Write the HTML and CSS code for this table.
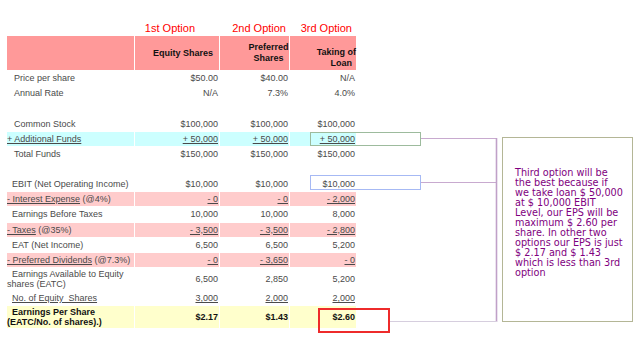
FILE: index.html
```html
<!DOCTYPE html>
<html>
<head>
<meta charset="utf-8">
<link rel="stylesheet" href="styles.css">
</head>
<body>
<div class="page">
  <table class="sheet">
    <colgroup>
      <col class="c-label"><col class="c-1"><col class="c-2"><col class="c-3">
    </colgroup>
    <tr class="titles">
      <td></td><td class="t1">1st Option</td><td class="t2">2nd Option</td><td class="t3">3rd Option</td>
    </tr>
    <tr class="head">
      <td></td>
      <td class="h1">Equity Shares</td>
      <td class="h2">Preferred<br>Shares</td>
      <td class="h3"><div class="h3a">Taking of</div><div>Loan</div></td>
    </tr>
    <tr><td class="lab i7">Price per share</td><td class="num">$50.00</td><td class="num">$40.00</td><td class="num">N/A</td></tr>
    <tr><td class="lab i7">Annual Rate</td><td class="num">N/A</td><td class="num">7.3%</td><td class="num">4.0%</td></tr>
    <tr><td class="lab"></td><td></td><td></td><td></td></tr>
    <tr><td class="lab i7">Common Stock</td><td class="num">$100,000</td><td class="num">$100,000</td><td class="num">$100,000</td></tr>
    <tr class="cyan"><td class="lab"><span class="u">+ Additional Funds</span></td><td class="num"><span class="u">+ 50,000</span></td><td class="num"><span class="u">+ 50,000</span></td><td class="num"><span class="u">+ 50,000</span></td></tr>
    <tr><td class="lab i7">Total Funds</td><td class="num">$150,000</td><td class="num">$150,000</td><td class="num">$150,000</td></tr>
    <tr><td class="lab"></td><td></td><td></td><td></td></tr>
    <tr><td class="lab i5">EBIT (Net Operating Income)</td><td class="num">$10,000</td><td class="num">$10,000</td><td class="num">$10,000</td></tr>
    <tr class="pink"><td class="lab"><span class="u">- Interest Expense</span> (@4%)</td><td class="num"><span class="u">- 0</span></td><td class="num"><span class="u">- 0</span></td><td class="num"><span class="u">- 2,000</span></td></tr>
    <tr><td class="lab i5">Earnings Before Taxes</td><td class="num">10,000</td><td class="num">10,000</td><td class="num">8,000</td></tr>
    <tr class="pink"><td class="lab"><span class="u">- Taxes</span> (@35%)</td><td class="num"><span class="u">- 3,500</span></td><td class="num"><span class="u">- 3,500</span></td><td class="num"><span class="u">- 2,800</span></td></tr>
    <tr><td class="lab i5">EAT (Net Income)</td><td class="num">6,500</td><td class="num">6,500</td><td class="num">5,200</td></tr>
    <tr class="pink"><td class="lab"><span class="u">- Preferred Dividends</span> (@7.3%)</td><td class="num"><span class="u">- 0</span></td><td class="num"><span class="u">- 3,650</span></td><td class="num"><span class="u">- 0</span></td></tr>
    <tr class="tall"><td class="lab ti5">Earnings Available to Equity<br>shares (EATC)</td><td class="num">6,500</td><td class="num">2,850</td><td class="num">5,200</td></tr>
    <tr><td class="lab i5"><span class="u">No. of Equity&nbsp; Shares</span></td><td class="num"><span class="u">3,000</span></td><td class="num"><span class="u">2,000</span></td><td class="num"><span class="u">2,000</span></td></tr>
    <tr class="eps"><td class="lab ti5">Earnings Per Share<br>(EATC/No. of shares).)</td><td class="num">$2.17</td><td class="num">$1.43</td><td class="num">$2.60</td></tr>
  </table>

  <div class="note">Third option will be<br>the best because if<br>we take loan $ 50,000<br>at $ 10,000 EBIT<br>Level, our EPS will be<br>maximum $ 2.60 per<br>share. In other two<br>options our EPS is just<br>$ 2.17 and $ 1.43<br>which is less than 3rd<br>option</div>

  <div class="mark mark-green"></div>
  <div class="mark mark-blue"></div>
  <div class="mark mark-red"></div>
  <svg class="connectors" width="640" height="338" viewBox="0 0 640 338">
    <line x1="421" y1="138.5" x2="497" y2="138.5" stroke="#c8aacf" stroke-width="1"/>
    <line x1="421" y1="182.5" x2="497" y2="182.5" stroke="#c8aacf" stroke-width="1"/>
    <line x1="496.5" y1="138" x2="496.5" y2="322" stroke="#c0a0c8" stroke-width="1.6"/>
    <line x1="390" y1="321.5" x2="497" y2="321.5" stroke="#d6cede" stroke-width="1.2"/>
  </svg>
</div>
</body>
</html>
```

FILE: styles.css
```css
html, body {
  margin: 0;
  padding: 0;
  background: #fff;
}

.page {
  position: relative;
  width: 640px;
  height: 338px;
  overflow: hidden;
  display: flex;
  align-items: flex-start;
  padding: 20px 0 0 6px;
  box-sizing: border-box;
}

.sheet {
  flex: none;
  border-collapse: separate;
  border-spacing: 1px;
  table-layout: fixed;
  width: 351px;
  font-family: "Liberation Sans", Arial, sans-serif;
  font-size: 9px;
  line-height: 10px;
  color: #4a4a4a;
}

.c-label { width: 127px; }
.c-1 { width: 84px; }
.c-2 { width: 69px; }
.c-3 { width: 66px; }

.sheet td {
  box-sizing: border-box;
  height: 14.17px;
  padding: 0 1px 0 0;
  vertical-align: middle;
  white-space: nowrap;
  overflow: visible;
}

.titles td {
  height: 14px;
  font-size: 11px;
  line-height: 12px;
  color: #f00;
  text-align: right;
}
.titles .t1 { padding-right: 24px; }
.titles .t2 { padding-right: 3px; }
.titles .t3 { padding-right: 4px; }

.head td {
  height: 34px;
  background: #ff9999;
  font-weight: bold;
  color: #111;
  line-height: 11px;
  text-align: right;
}
.head .h1 { padding-right: 6px; }
.head .h2 { text-align: center; padding-left: 28px; padding-right: 0; }
.head .h3 { vertical-align: bottom; padding-right: 4px; padding-bottom: 1px; }
.head .h3a { margin-right: -4px; }

.lab { text-align: left; }
.i7 { padding-left: 7px !important; }
.i5 { padding-left: 5px !important; }
.ti5 { text-indent: 5px; }

.num { text-align: right; }

.u { text-decoration: underline; }

.cyan td { background: #ccffff; }
.pink td { background: #ffcccc; }

.tall td { height: 21.8px; }

.eps td {
  height: 22.5px;
  background: #ffffcc;
  font-weight: bold;
  color: #111;
}

.note {
  flex: none;
  box-sizing: border-box;
  width: 131px;
  height: 185px;
  margin: 117px 0 0 145px;
  border: 1px solid #b4b696;
  padding: 30px 0 0 12px;
  font-family: "DejaVu Sans", Verdana, sans-serif;
  font-size: 9.7px;
  line-height: 10px;
  color: #800080;
  white-space: nowrap;
}

.mark {
  position: absolute;
  box-sizing: border-box;
}
.mark-green {
  left: 310px;
  top: 132px;
  width: 111px;
  height: 14px;
  border: 1px solid #9dbb9d;
}
.mark-blue {
  left: 310px;
  top: 175px;
  width: 111px;
  height: 15px;
  border: 1px solid #a6b9f4;
}
.mark-red {
  left: 318px;
  top: 308px;
  width: 72px;
  height: 25px;
  border: 2px solid #ee2b2b;
}

.connectors {
  position: absolute;
  left: 0;
  top: 0;
  pointer-events: none;
}
```
